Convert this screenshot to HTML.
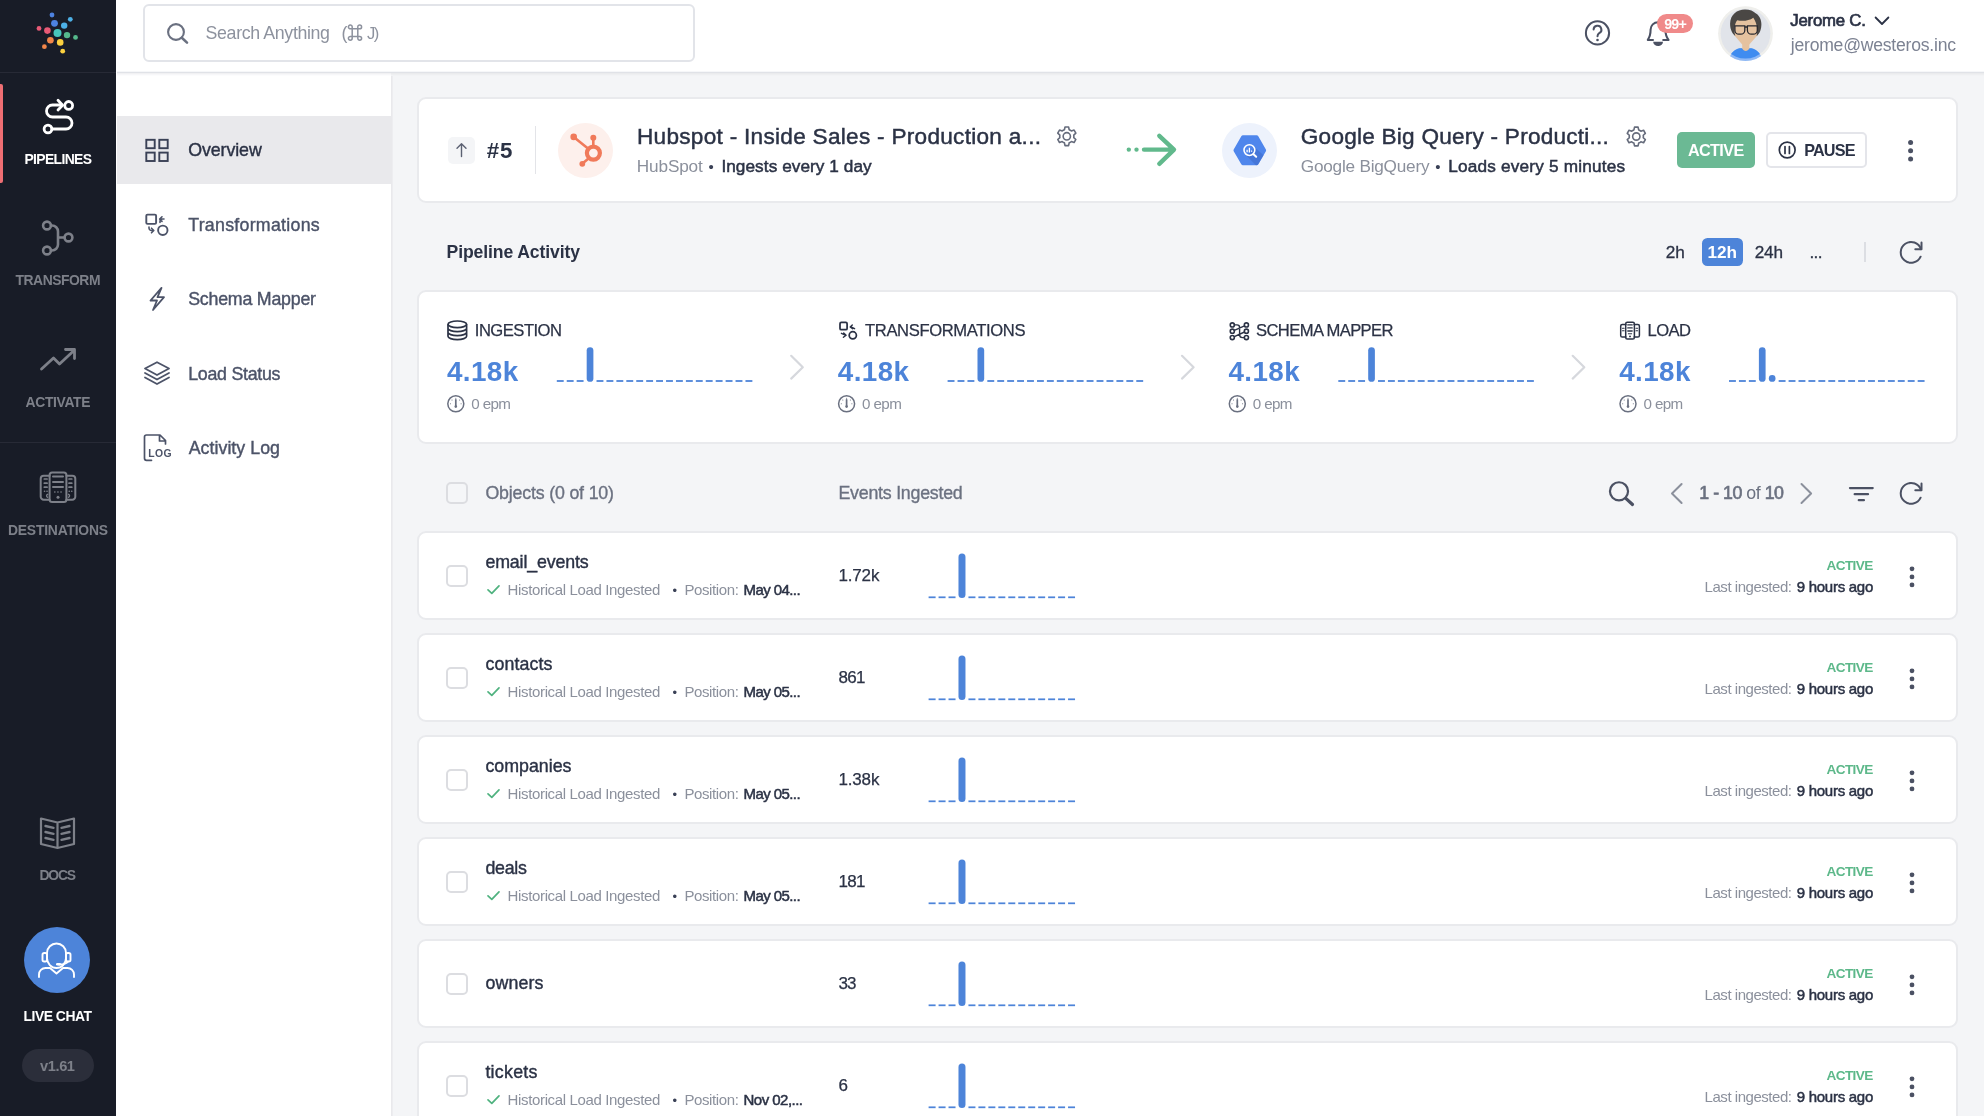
<!DOCTYPE html>
<html><head><meta charset="utf-8"><title>Pipeline Overview</title>
<style>
html,body{margin:0;padding:0;}
body{width:1984px;height:1116px;overflow:hidden;position:relative;background:#f4f5f7;font-family:"Liberation Sans", sans-serif;color:#2b3245;}
.t{position:absolute;white-space:pre;}
.a{position:absolute;}
.card{position:absolute;background:#fff;border:2px solid #e9eaed;border-radius:9px;box-sizing:border-box;}
svg{position:absolute;overflow:visible;}
#w{position:absolute;left:0;top:0;width:1984px;height:1116px;overflow:hidden;will-change:transform;}
</style></head><body><div id="w">
<div class="a" style="left:116px;top:0;width:1868px;height:71px;background:#fff;"></div>
<div class="a" style="left:116px;top:73px;width:275px;height:1043px;background:#fff;"></div>
<div class="a" style="left:391px;top:73px;width:1px;height:1043px;background:#e9e9ec;"></div>
<div class="a" style="left:392px;top:73px;width:1px;height:1043px;background:#ededf0;"></div>
<div class="a" style="left:117px;top:116px;width:274px;height:68px;background:#e9e9ec;"></div>
<div class="a" style="left:117px;top:71px;width:1867px;height:1px;background:#f6f7f9;"></div>
<div class="a" style="left:117px;top:72px;width:1867px;height:1px;background:#e0e2e7;"></div>
<div class="a" style="left:117px;top:73px;width:1867px;height:1px;background:#eaebed;"></div>
<div class="a" style="left:117px;top:74px;width:1867px;height:1px;background:#eeeff1;"></div>
<div class="a" style="left:117px;top:75px;width:1867px;height:1px;background:#f2f3f5;"></div>
<div class="a" style="left:117px;top:73px;width:274px;height:1px;background:#f1f1f3;"></div>
<div class="a" style="left:117px;top:74px;width:274px;height:1px;background:#f7f7f9;"></div>
<div class="a" style="left:117px;top:75px;width:274px;height:1px;background:#fcfcfd;"></div>
<div class="a" style="left:116px;top:0;width:1px;height:1116px;background:#fff;"></div>
<div class="a" style="left:0;top:0;width:116px;height:1116px;background:#181c27;"></div>
<div class="a" style="left:0;top:71.5px;width:116px;height:1.5px;background:#272a36;"></div>
<div class="a" style="left:0;top:441.5px;width:116px;height:1.5px;background:#272a36;"></div>
<div class="a" style="left:0;top:84px;width:3px;height:99px;background:#ee6e73;border-radius:0 2px 2px 0;"></div>
<svg style="left:0;top:0" width="116" height="72"><circle cx="52" cy="15" r="2.4" fill="#4d82e0"/><circle cx="70.3" cy="19.3" r="2.4" fill="#4db0e6"/><circle cx="54.5" cy="23.3" r="3.4" fill="#4d82e0"/><circle cx="64.2" cy="25.6" r="3.2" fill="#4db0e6"/><circle cx="39" cy="28.4" r="2.4" fill="#e85a76"/><circle cx="47.4" cy="30.6" r="3.3" fill="#e85a76"/><circle cx="57.5" cy="32.9" r="4" fill="#47c5bd"/><circle cx="67" cy="35.1" r="3.2" fill="#55b98c"/><circle cx="75.5" cy="37.4" r="2.4" fill="#55b98c"/><circle cx="50.4" cy="40.2" r="3.3" fill="#f2864a"/><circle cx="60.2" cy="42.4" r="3.3" fill="#fbd03f"/><circle cx="44.4" cy="46.7" r="2.4" fill="#f2864a"/><circle cx="62.7" cy="51.2" r="2.4" fill="#fbd03f"/></svg>
<svg style="left:0;top:0" width="116" height="200" fill="none" stroke="#ffffff" stroke-width="2.8" stroke-linecap="round" stroke-linejoin="round"><circle cx="48" cy="129" r="3.9"/><circle cx="68.7" cy="105.4" r="3.9"/><path d="M52 129 H66 a6 6 0 0 0 6 -6 a6 6 0 0 0 -6 -6 H52.5 a6 6 0 0 1 -6 -6 a6 6 0 0 1 6 -6 H61.5"/><path d="M58 100.2 L62.6 105.2 L58 110"/></svg>
<div class="t" style="top:150.01px;font-size:13.9px;line-height:18px;height:18px;color:#ffffff;left:24.50px;font-weight:700;letter-spacing:-0.645px;">PIPELINES</div>
<svg style="left:0;top:0" width="116" height="300" fill="none" stroke="#7d8089" stroke-width="2.6" stroke-linecap="round" stroke-linejoin="round"><circle cx="47" cy="225.5" r="3.9"/><circle cx="47" cy="250.5" r="3.9"/><circle cx="68.5" cy="237.5" r="3.9"/><path d="M51 225.5 h1 a6 6 0 0 1 6 6 v13 a6 6 0 0 1 -6 6 h-1 M58 237.5 h6.5"/></svg>
<div class="t" style="top:271.01px;font-size:13.9px;line-height:18px;height:18px;color:#7d8089;left:15.50px;font-weight:700;letter-spacing:-0.469px;">TRANSFORM</div>
<svg style="left:0;top:0" width="116" height="400" fill="none" stroke="#7d8089" stroke-width="2.8" stroke-linecap="round" stroke-linejoin="round"><path d="M41.5 369 L53.5 358 L59.5 364 L74 350.5 M65.5 349.5 H74.5 V358.5"/></svg>
<div class="t" style="top:392.51px;font-size:13.9px;line-height:18px;height:18px;color:#7d8089;left:25.50px;font-weight:700;letter-spacing:-0.342px;">ACTIVATE</div>
<svg style="left:0;top:0" width="116" height="520" fill="none" stroke="#7d8089" stroke-width="2" stroke-linecap="round" stroke-linejoin="round"><rect x="49.6" y="472.6" width="16.8" height="29.4" rx="2.5"/><path d="M49.6 475.8 H43.7 a3 3 0 0 0 -3 3 v17.9 a3 3 0 0 0 3 3 H49.6 M66.4 475.8 H72.3 a3 3 0 0 1 3 3 v17.9 a3 3 0 0 1 -3 3 H66.4"/><path d="M53 476.6 h10 M53 481.9 h10 M53 487.1 h10" /><path d="M44.300 479 h2.800 M44.300 483.200 h2.800 M44.300 487.200 h2.800 M69 479 h2.800 M69 483.200 h2.800 M69 487.200 h2.800" stroke-width="1.700"/><path d="M54.800 492 h.1 M57.900 492 h.1 M61 492 h.1 M44.500 491.300 h.1 M47 491.300 h.1 M69.200 491.300 h.1 M71.700 491.300 h.1" stroke-width="1.600"/><circle cx="58" cy="497.300" r="1.500" fill="#7d8089" stroke="none"/><path d="M47.600 494.300 a1.600 1.600 0 0 0 0 3 M68.500 494.300 a1.600 1.600 0 0 1 0 3" stroke-width="1.400"/></svg>
<div class="t" style="top:520.51px;font-size:13.9px;line-height:18px;height:18px;color:#7d8089;left:8.00px;font-weight:700;letter-spacing:-0.217px;">DESTINATIONS</div>
<svg style="left:0;top:0" width="116" height="900" fill="none" stroke="#7d8089" stroke-width="2.2" stroke-linecap="round" stroke-linejoin="round"><path d="M57.5 822.5 L41 818.5 V844 L57.5 848 L74 844 V818.5 Z M57.5 822.5 V848"/><path d="M45.5 826 l8 1.8 M45.5 832 l8 1.8 M45.5 838 l8 1.8 M69.5 826 l-8 1.8 M69.5 832 l-8 1.8 M69.5 838 l-8 1.8" stroke-width="2.4"/></svg>
<div class="t" style="top:866.01px;font-size:13.9px;line-height:18px;height:18px;color:#7d8089;left:39.50px;font-weight:700;letter-spacing:-1.214px;">DOCS</div>
<div class="a" style="left:23.5px;top:927px;width:66px;height:66px;border-radius:50%;background:#4d84d9;"></div>
<svg style="left:0;top:0" width="116" height="1000" fill="none" stroke="#fff" stroke-width="1.9" stroke-linecap="round" stroke-linejoin="round"><path d="M47 958 v-5 a9.5 9.5 0 0 1 19 0 v5 a9 9.5 0 0 1 -19 0"/><rect x="42.5" y="953" width="4.5" height="8.5" rx="1.8"/><rect x="66" y="953" width="4.5" height="8.5" rx="1.8"/><path d="M68 961.5 q-2 3 -9 3" /><rect x="56" y="963" width="5" height="2.4" rx="1.2" fill="#fff" stroke="none"/><path d="M39 977 v-2.5 a6.5 6.5 0 0 1 6.5 -6.5 h4.5 l6.5 5.5 l6.5 -5.5 h4.5 a6.5 6.5 0 0 1 6.5 6.5 v2.5"/></svg>
<div class="t" style="top:1006.51px;font-size:13.9px;line-height:18px;height:18px;color:#ffffff;left:23.50px;font-weight:700;letter-spacing:-0.473px;">LIVE CHAT</div>
<div class="a" style="left:22px;top:1049px;width:71.5px;height:32.5px;border-radius:17px;background:#2b2e3a;"></div>
<div class="t" style="top:1056.52px;font-size:14.6px;line-height:19px;height:19px;color:#7d8089;left:40.00px;font-weight:700;letter-spacing:-0.383px;">v1.61</div>
<div class="a" style="left:143px;top:4px;width:551.5px;height:58px;box-sizing:border-box;border:2px solid #e2e4e9;border-radius:6px;background:#fff;"></div>
<svg style="left:0;top:0" width="400" height="72" fill="none" stroke="#6a7080" stroke-width="2.1" stroke-linecap="round"><circle cx="176" cy="32" r="7.9"/><path d="M181.8 37.8 L187 42.6" stroke-width="2.6"/></svg>
<div class="t" style="top:22.41px;font-size:17.8px;line-height:23px;height:23px;color:#8d929e;left:205.60px;letter-spacing:-0.364px;">Search Anything</div>
<div class="t" style="top:22.41px;font-size:17.8px;line-height:23px;height:23px;color:#8d929e;left:341.40px;">(</div>
<svg style="left:0;top:0" width="400" height="72" fill="none" stroke="#8d929e" stroke-width="1.5"><path d="M352.2 28.8 h5.6 v7.6 h-5.6 z M352.2 28.8 h-1.6 a1.9 1.9 0 1 1 1.6 -1.9 z M357.8 28.8 v-1.9 a1.9 1.9 0 1 1 1.9 1.9 z M357.8 36.4 h1.9 a1.9 1.9 0 1 1 -1.9 1.9 z M352.2 36.4 v1.9 a1.9 1.9 0 1 1 -1.9 -1.9 z"/></svg>
<div class="t" style="top:23.41px;font-size:16.6px;line-height:22px;height:22px;color:#8d929e;left:366.90px;letter-spacing:-1.400px;">J)</div>
<svg style="left:0;top:0" width="1984" height="72" fill="none" stroke="#4b5163" stroke-width="2" stroke-linecap="round" stroke-linejoin="round"><circle cx="1597.5" cy="32.9" r="11.6"/><path d="M1593.6 29.6 a3.9 3.9 0 1 1 5.6 3.5 q-1.7 1 -1.7 3.2"/><circle cx="1597.5" cy="40" r="1.3" fill="#4b5163" stroke="none"/><path d="M1653 39.9 H1647.8 C1650.2 36.5 1650.6 33.5 1650.6 29.6 A7.4 7.4 0 0 1 1665.4 29.6 C1665.4 33.5 1665.8 36.5 1668.5 39.9 H1663.2" stroke-width="2.05"/><path d="M1653.2 41.7 H1663 A4.9 4.3 0 0 1 1653.2 41.7 Z" fill="#4b5163" stroke="none"/></svg>
<div class="a" style="left:1657.4px;top:13.8px;width:36.1px;height:19.3px;border-radius:10px;background:#f08a8a;"></div>
<div class="t" style="top:15.00px;font-size:14.3px;line-height:19px;height:19px;color:#fff;left:1664.20px;font-weight:700;letter-spacing:-0.783px;">99+</div>
<svg style="left:1718px;top:5.5px" width="55" height="56" viewBox="0 0 55 56"><defs><clipPath id="av"><circle cx="27.5" cy="27.6" r="27.4"/></clipPath><clipPath id="av2"><circle cx="27.5" cy="27.6" r="25"/></clipPath></defs><circle cx="27.5" cy="27.6" r="27.4" fill="#efefec"/><circle cx="27.5" cy="27.6" r="24.9" fill="#e1e4ea"/><g clip-path="url(#av)"><path d="M10.500 56 C11.500 47.500 16 43.500 21.600 42.200 L33.400 42.200 C39 43.500 43.500 47.500 44.500 56 Z" fill="#8fb9f6"/><path clip-path="url(#av2)" d="M10.500 56 C11.500 47.500 16 43.500 21.600 42.200 L33.400 42.200 C39 43.500 43.500 47.500 44.500 56 Z" fill="#3f8cf0"/><path d="M24.200 36 h7.100 v6.200 c-1.500 3.600 -5.600 3.600 -7.100 0 z" fill="#e5c29f"/><path d="M16.500 12 H39.300 V29.500 L31.300 38.600 H24.200 L16.500 29.500 Z" fill="#e5c29f"/><path d="M17.300 30 C13.500 27 12 22 12.100 17.500 C12.300 8.500 19 3.400 27 3.400 C32 3.400 35.500 5 38 7.500 C41.500 9.500 43.400 14 43.400 18 C43.400 23 42 27.500 38.600 30 C39.600 26 39.800 18 35.300 11.800 C31 15 24 15.500 19.200 14.200 C16.200 18 16 25 17.300 30 Z" fill="#4a4744"/><path d="M16.900 19.900 h9.900 v4.300 a4 4 0 0 1 -4 4 h-1.900 a4 4 0 0 1 -4 -4 z M29.400 19.900 h9.900 v4.300 a4 4 0 0 1 -4 4 h-1.900 a4 4 0 0 1 -4 -4 z M26.800 21 h2.600" fill="none" stroke="#2a2a30" stroke-width="1.300"/></g></svg>
<div class="t" style="top:9.90px;font-size:16.8px;line-height:22px;height:22px;color:#2b3245;left:1790.30px;letter-spacing:-0.226px;-webkit-text-stroke:0.7px #2b3245;">Jerome C.</div>
<svg style="left:0;top:0" width="1984" height="72" fill="none" stroke="#2b3245" stroke-width="1.8" stroke-linecap="round" stroke-linejoin="round"><path d="M1875.6 17.5 L1882 24 L1888.4 17.500"/></svg>
<div class="t" style="top:33.91px;font-size:17.6px;line-height:23px;height:23px;color:#7c8292;left:1790.80px;letter-spacing:-0.235px;">jerome@westeros.inc</div>
<svg style="left:0;top:0" width="400" height="520" fill="none" stroke="#3a4156" stroke-width="1.9" stroke-linejoin="miter"><rect x="146.3" y="139.8" width="8.4" height="8.400"/><rect x="159.3" y="139.800" width="8.400" height="8.400"/><rect x="146.3" y="152.600" width="8.400" height="8.400"/><rect x="159.300" y="152.600" width="8.400" height="8.400"/></svg>
<div class="t" style="top:138.91px;font-size:17.8px;line-height:23px;height:23px;color:#2b3245;left:188.20px;letter-spacing:-0.073px;-webkit-text-stroke:0.4px #2b3245;">Overview</div>
<svg style="left:0;top:0" width="400" height="520" fill="none" stroke="#4c5368" stroke-width="1.9" stroke-linecap="round" stroke-linejoin="round"><rect x="146.300" y="214.600" width="9.800" height="9.300" rx="1.200"/><circle cx="162.800" cy="230.300" r="4.700"/><path d="M160 222.500 v-1 a2.500 2.500 0 0 1 2.500 -2.500 h1.500 M162 216.800 l-2.300 2.300 l2.300 2.300" stroke-width="1.600"/><path d="M149 227 v1 a2.500 2.500 0 0 0 2.500 2.500 h1.500 M151.500 228.200 l2.300 2.300 l-2.300 2.300" stroke-width="1.600"/></svg>
<div class="t" style="top:213.50px;font-size:17.8px;line-height:23px;height:23px;color:#4c5368;left:188.20px;letter-spacing:0.263px;-webkit-text-stroke:0.4px #4c5368;">Transformations</div>
<svg style="left:0;top:0" width="400" height="520" fill="none" stroke="#4c5368" stroke-width="1.800" stroke-linecap="round" stroke-linejoin="round"><path d="M161.500 287.800 L150.500 300.500 H157 L153 310 L164 297.200 H157.500 Z"/></svg>
<div class="t" style="top:288.00px;font-size:17.8px;line-height:23px;height:23px;color:#4c5368;left:188.20px;letter-spacing:-0.222px;-webkit-text-stroke:0.4px #4c5368;">Schema Mapper</div>
<svg style="left:0;top:0" width="400" height="520" fill="none" stroke="#4c5368" stroke-width="1.800" stroke-linecap="round" stroke-linejoin="round"><path d="M157 362.200 L169 368.500 L157 375 L145 368.500 Z M145 373 L157 379.500 L169 373 M145 377.500 L157 384 L169 377.500"/></svg>
<div class="t" style="top:362.50px;font-size:17.8px;line-height:23px;height:23px;color:#4c5368;left:188.20px;letter-spacing:-0.261px;-webkit-text-stroke:0.4px #4c5368;">Load Status</div>
<svg style="left:0;top:0" width="400" height="520" fill="none" stroke="#4c5368" stroke-width="1.700" stroke-linecap="round" stroke-linejoin="round"><path d="M151.500 460.300 H146.500 a2 2 0 0 1 -2 -2 V437 a2 2 0 0 1 2 -2 H160 L165.500 440.500 V444 M159.500 435.300 V441 H165.500"/></svg>
<div class="t" style="top:446.91px;font-size:10.4px;line-height:14px;height:14px;color:#4c5368;left:148.30px;font-weight:700;letter-spacing:0.342px;">LOG</div>
<div class="t" style="top:437.00px;font-size:17.8px;line-height:23px;height:23px;color:#4c5368;left:188.70px;letter-spacing:0.034px;-webkit-text-stroke:0.4px #4c5368;">Activity Log</div>
<div class="card" style="left:417px;top:97px;width:1540.5px;height:106px;"></div>
<div class="a" style="left:448px;top:136.800px;width:27px;height:27px;border-radius:5px;background:#f4f5f7;"></div>
<svg style="left:0;top:0" width="1984" height="220" fill="none" stroke="#5b6172" stroke-width="1.400" stroke-linecap="round" stroke-linejoin="round"><path d="M461.500 156.500 V144 M457 148.300 L461.500 143.800 L466 148.300"/></svg>
<div class="t" style="top:136.22px;font-size:22.3px;line-height:29px;height:29px;color:#2b3245;left:486.70px;font-weight:700;letter-spacing:0.887px;">#5</div>
<div class="a" style="left:534.700px;top:125.700px;width:1.500px;height:48.700px;background:#e3e4e8;"></div>
<div class="a" style="left:558.2px;top:122.700px;width:55.200px;height:55.200px;border-radius:50%;background:#fdf0ec;"></div>
<svg style="left:0;top:0" width="1984" height="220" fill="none" stroke="#f07a5a" stroke-linecap="round"><circle cx="593.4" cy="153.1" r="6.5" stroke-width="4.200"/><path d="M573.700 136.900 L588 148.500" stroke-width="2.600"/><circle cx="573.700" cy="136.900" r="3.300" fill="#f07a5a" stroke="none"/><path d="M593.300 146 V138.500" stroke-width="2.600"/><circle cx="593.300" cy="137.700" r="3" fill="#f07a5a" stroke="none"/><path d="M588.500 158.500 L582.500 163.500" stroke-width="2.600"/><circle cx="582.300" cy="163.800" r="2.900" fill="#f07a5a" stroke="none"/></svg>
<div class="t" style="top:122.10px;font-size:22.6px;line-height:29px;height:29px;color:#2b3245;left:637.00px;letter-spacing:0.280px;-webkit-text-stroke:0.45px #2b3245;">Hubspot - Inside Sales - Production a...</div>
<div class="t" style="top:155.01px;font-size:17.2px;line-height:22px;height:22px;color:#8b909c;left:636.80px;letter-spacing:-0.148px;">HubSpot</div>
<div class="t" style="top:157.00px;font-size:15px;line-height:20px;height:20px;color:#3a4156;left:708.50px;">•</div>
<div class="t" style="top:155.01px;font-size:17.2px;line-height:22px;height:22px;color:#2b3245;left:721.40px;letter-spacing:0.070px;-webkit-text-stroke:0.5px #2b3245;">Ingests every 1 day</div>
<svg style="left:0;top:0" width="1984" height="220"><g transform="translate(1066.8,136.3) scale(1.04)" fill="none" stroke="#666c7c" stroke-width="1.550" stroke-linejoin="round"><circle r="3.500"/><path transform="translate(0,0.8)" d="M-1.700 -9.800 h3.400 l0.600 2.700 a7.200 7.200 0 0 1 2.100 1.200 l2.600 -0.900 l1.700 2.950 l-2 1.850 a7.200 7.200 0 0 1 0 2.400 l2 1.850 l-1.700 2.950 l-2.600 -0.900 a7.200 7.200 0 0 1 -2.100 1.200 l-0.600 2.700 h-3.400 l-0.600 -2.700 a7.200 7.200 0 0 1 -2.100 -1.200 l-2.600 0.900 l-1.700 -2.950 l2 -1.850 a7.200 7.200 0 0 1 0 -2.400 l-2 -1.850 l1.700 -2.950 l2.600 0.900 a7.200 7.200 0 0 1 2.100 -1.200 z"/></g><g transform="translate(1636.3,136.5) scale(1.04)" fill="none" stroke="#666c7c" stroke-width="1.550" stroke-linejoin="round"><circle r="3.500"/><path transform="translate(0,0.8)" d="M-1.700 -9.800 h3.400 l0.600 2.700 a7.200 7.200 0 0 1 2.100 1.200 l2.600 -0.900 l1.700 2.950 l-2 1.850 a7.200 7.200 0 0 1 0 2.400 l2 1.850 l-1.700 2.950 l-2.600 -0.900 a7.200 7.200 0 0 1 -2.100 1.200 l-0.600 2.700 h-3.400 l-0.600 -2.700 a7.200 7.200 0 0 1 -2.100 -1.200 l-2.600 0.900 l-1.700 -2.950 l2 -1.850 a7.200 7.200 0 0 1 0 -2.400 l-2 -1.850 l1.700 -2.950 l2.600 0.900 a7.200 7.200 0 0 1 2.100 -1.200 z"/></g></svg>
<svg style="left:0;top:0" width="1984" height="220" fill="none" stroke="#61b98c" stroke-width="4.400" stroke-linecap="round" stroke-linejoin="round"><path d="M1128.800 149.600 h.01 M1136.500 149.600 h.01 M1144 149.600 H1173.500 M1159.300 135.800 L1174 149.600 L1159.300 163.800"/></svg>
<div class="a" style="left:1222.2px;top:122.700px;width:55.200px;height:55.200px;border-radius:50%;background:#edf2fc;"></div>
<svg style="left:0;top:0" width="1984" height="220"><defs><clipPath id="hx"><path d="M1243 135.3 h13.6 a2 2 0 0 1 1.7 1 l7.6 13.1 a2 2 0 0 1 0 1.8 l-7.6 13.1 a2 2 0 0 1 -1.7 1 h-13.6 a2 2 0 0 1 -1.7 -1 l-7.6 -13.1 a2 2 0 0 1 0 -1.8 l7.6 -13.1 a2 2 0 0 1 1.7 -1 z"/></clipPath></defs><path d="M1243 135.3 h13.6 a2 2 0 0 1 1.7 1 l7.6 13.1 a2 2 0 0 1 0 1.8 l-7.6 13.1 a2 2 0 0 1 -1.7 1 h-13.6 a2 2 0 0 1 -1.7 -1 l-7.6 -13.1 a2 2 0 0 1 0 -1.8 l7.6 -13.1 a2 2 0 0 1 1.7 -1 z" fill="#4f86ec"/><g clip-path="url(#hx)"><path d="M1246.400 155.600 L1256.500 166 H1268 V159 L1254.800 147.600 Z" fill="#3f6dcb" opacity=".6"/></g><circle cx="1249.400" cy="150.100" r="5.400" fill="none" stroke="#fff" stroke-width="1.600"/><path d="M1253.500 154.200 L1256.200 156.800" stroke="#fff" stroke-width="2" stroke-linecap="round"/><path d="M1247.100 149.800 v2.400 M1249.400 147.700 v4.900 M1251.600 150.400 v1.400" stroke="#fff" stroke-width="1.300"/></svg>
<div class="t" style="top:122.10px;font-size:22.6px;line-height:29px;height:29px;color:#2b3245;left:1300.80px;letter-spacing:0.231px;-webkit-text-stroke:0.45px #2b3245;">Google Big Query - Producti...</div>
<div class="t" style="top:154.71px;font-size:17.2px;line-height:22px;height:22px;color:#8b909c;left:1300.80px;letter-spacing:-0.225px;">Google BigQuery</div>
<div class="t" style="top:156.71px;font-size:15px;line-height:20px;height:20px;color:#3a4156;left:1435.20px;">•</div>
<div class="t" style="top:154.71px;font-size:17.2px;line-height:22px;height:22px;color:#2b3245;left:1448.20px;letter-spacing:0.198px;-webkit-text-stroke:0.5px #2b3245;">Loads every 5 minutes</div>
<div class="a" style="left:1676.8px;top:132.300px;width:78.400px;height:35.400px;border-radius:5px;background:#6bb994;"></div>
<div class="t" style="top:140.11px;font-size:16.2px;line-height:21px;height:21px;color:#fff;left:1688.00px;font-weight:700;letter-spacing:-0.635px;">ACTIVE</div>
<div class="a" style="left:1766.4px;top:132.300px;width:100.300px;height:35.400px;box-sizing:border-box;border:2px solid #e4e5ea;border-radius:5px;background:#fff;"></div>
<svg style="left:0;top:0" width="1984" height="220" fill="none" stroke="#2b3245" stroke-width="1.700" stroke-linecap="round"><circle cx="1787.200" cy="150" r="7.900"/><path d="M1785 146.500 v7 M1789.400 146.500 v7"/></svg>
<div class="t" style="top:140.11px;font-size:16.2px;line-height:21px;height:21px;color:#2b3245;left:1804.20px;font-weight:700;letter-spacing:-0.820px;">PAUSE</div>
<svg style="left:0;top:0" width="1984" height="220" fill="#4b5163"><circle cx="1910.600" cy="142.600" r="2.500"/><circle cx="1910.600" cy="150.800" r="2.500"/><circle cx="1910.600" cy="159" r="2.500"/></svg>
<div class="t" style="top:240.71px;font-size:17.6px;line-height:23px;height:23px;color:#2b3245;left:446.60px;font-weight:700;letter-spacing:-0.117px;">Pipeline Activity</div>
<div class="t" style="top:240.71px;font-size:17.2px;line-height:22px;height:22px;color:#2b3245;left:1665.80px;letter-spacing:-0.125px;-webkit-text-stroke:0.3px #2b3245;">2h</div>
<div class="a" style="left:1701.6px;top:238.200px;width:41.300px;height:27.400px;border-radius:5.500px;background:#4d84d9;"></div>
<div class="t" style="top:240.71px;font-size:17.2px;line-height:22px;height:22px;color:#fff;left:1707.50px;font-weight:700;letter-spacing:-0.062px;">12h</div>
<div class="t" style="top:240.71px;font-size:17.2px;line-height:22px;height:22px;color:#2b3245;left:1754.80px;letter-spacing:-0.244px;-webkit-text-stroke:0.3px #2b3245;">24h</div>
<div class="t" style="top:240.71px;font-size:17.2px;line-height:22px;height:22px;color:#2b3245;left:1809.50px;letter-spacing:-0.664px;-webkit-text-stroke:0.3px #2b3245;">...</div>
<div class="a" style="left:1864px;top:242.400px;width:1.500px;height:20px;background:#dcdee3;"></div>
<svg style="left:0;top:0" width="1984" height="520"><g transform="translate(1911.1,252.4)" fill="none" stroke="#4b5163" stroke-width="2" stroke-linecap="round" stroke-linejoin="round"><path d="M9.500 4.300 A10.400 10.400 0 1 1 9.900 -3.300"/><path d="M4.200 -3.200 H10.400 V-9.800"/></g></svg>
<div class="card" style="left:417px;top:290px;width:1540.5px;height:154.2px;"></div>
<div class="t" style="top:320.31px;font-size:16.6px;line-height:22px;height:22px;color:#2b3245;left:474.80px;letter-spacing:-0.510px;-webkit-text-stroke:0.25px #2b3245;">INGESTION</div>
<div class="t" style="top:354.11px;font-size:27.8px;line-height:36px;height:36px;color:#4d84d9;left:447.00px;font-weight:700;letter-spacing:0.409px;">4.18k</div>
<div class="t" style="top:393.61px;font-size:15.2px;line-height:20px;height:20px;color:#8b909c;left:471.30px;letter-spacing:-0.630px;">0 epm</div>
<div class="t" style="top:320.31px;font-size:16.6px;line-height:22px;height:22px;color:#2b3245;left:865.00px;letter-spacing:-0.367px;-webkit-text-stroke:0.25px #2b3245;">TRANSFORMATIONS</div>
<div class="t" style="top:354.11px;font-size:27.8px;line-height:36px;height:36px;color:#4d84d9;left:837.80px;font-weight:700;letter-spacing:0.409px;">4.18k</div>
<div class="t" style="top:393.61px;font-size:15.2px;line-height:20px;height:20px;color:#8b909c;left:862.10px;letter-spacing:-0.630px;">0 epm</div>
<div class="t" style="top:320.31px;font-size:16.6px;line-height:22px;height:22px;color:#2b3245;left:1256.00px;letter-spacing:-0.605px;-webkit-text-stroke:0.25px #2b3245;">SCHEMA MAPPER</div>
<div class="t" style="top:354.11px;font-size:27.8px;line-height:36px;height:36px;color:#4d84d9;left:1228.50px;font-weight:700;letter-spacing:0.409px;">4.18k</div>
<div class="t" style="top:393.61px;font-size:15.2px;line-height:20px;height:20px;color:#8b909c;left:1252.80px;letter-spacing:-0.630px;">0 epm</div>
<div class="t" style="top:320.31px;font-size:16.6px;line-height:22px;height:22px;color:#2b3245;left:1647.50px;letter-spacing:-0.562px;-webkit-text-stroke:0.25px #2b3245;">LOAD</div>
<div class="t" style="top:354.11px;font-size:27.8px;line-height:36px;height:36px;color:#4d84d9;left:1619.20px;font-weight:700;letter-spacing:0.409px;">4.18k</div>
<div class="t" style="top:393.61px;font-size:15.2px;line-height:20px;height:20px;color:#8b909c;left:1643.50px;letter-spacing:-0.630px;">0 epm</div>
<svg style="left:0;top:0" width="1984" height="460"><g stroke="#4d84d9" stroke-width="1.8" fill="none"><path d="M556.80 381.00 h6.90"/><path d="M566.73 381.00 h6.90"/><path d="M576.66 381.00 h6.90"/><path d="M596.52 381.00 h6.90"/><path d="M606.45 381.00 h6.90"/><path d="M616.38 381.00 h6.90"/><path d="M626.31 381.00 h6.90"/><path d="M636.24 381.00 h6.90"/><path d="M646.17 381.00 h6.90"/><path d="M656.10 381.00 h6.90"/><path d="M666.03 381.00 h6.90"/><path d="M675.96 381.00 h6.90"/><path d="M685.89 381.00 h6.90"/><path d="M695.82 381.00 h6.90"/><path d="M705.75 381.00 h6.90"/><path d="M715.68 381.00 h6.90"/><path d="M725.61 381.00 h6.90"/><path d="M735.54 381.00 h6.90"/><path d="M745.47 381.00 h6.90"/></g><rect x="586.69" y="347.20" width="6.70" height="34.55" rx="3.35" fill="#4d84d9"/><g transform="translate(455.8,403.8)" fill="none" stroke="#6a7080" stroke-width="1.500" stroke-linecap="round"><circle r="8"/><path d="M0 -4 V2.200" stroke-width="1.700"/><circle cy="2.800" r="1.300" fill="#6a7080" stroke="none"/><path d="M-5.300 0 h.01 M5.300 0 h.01 M-3.800 -3.800 h.01 M3.800 -3.800 h.01 M0 -5.600 h.01" stroke-width="1.100"/></g><path d="M791.20 355.800 L802.80 367.200 L791.20 378.600" fill="none" stroke="#d6d8dd" stroke-width="2.200" stroke-linecap="round" stroke-linejoin="round"/><g stroke="#4d84d9" stroke-width="1.8" fill="none"><path d="M947.60 381.00 h6.90"/><path d="M957.53 381.00 h6.90"/><path d="M967.46 381.00 h6.90"/><path d="M987.32 381.00 h6.90"/><path d="M997.25 381.00 h6.90"/><path d="M1007.18 381.00 h6.90"/><path d="M1017.11 381.00 h6.90"/><path d="M1027.04 381.00 h6.90"/><path d="M1036.97 381.00 h6.90"/><path d="M1046.90 381.00 h6.90"/><path d="M1056.83 381.00 h6.90"/><path d="M1066.76 381.00 h6.90"/><path d="M1076.69 381.00 h6.90"/><path d="M1086.62 381.00 h6.90"/><path d="M1096.55 381.00 h6.90"/><path d="M1106.48 381.00 h6.90"/><path d="M1116.41 381.00 h6.90"/><path d="M1126.34 381.00 h6.90"/><path d="M1136.27 381.00 h6.90"/></g><rect x="977.49" y="347.20" width="6.70" height="34.55" rx="3.35" fill="#4d84d9"/><g transform="translate(846.5999999999999,403.8)" fill="none" stroke="#6a7080" stroke-width="1.500" stroke-linecap="round"><circle r="8"/><path d="M0 -4 V2.200" stroke-width="1.700"/><circle cy="2.800" r="1.300" fill="#6a7080" stroke="none"/><path d="M-5.300 0 h.01 M5.300 0 h.01 M-3.800 -3.800 h.01 M3.800 -3.800 h.01 M0 -5.600 h.01" stroke-width="1.100"/></g><path d="M1182.00 355.800 L1193.60 367.200 L1182.00 378.600" fill="none" stroke="#d6d8dd" stroke-width="2.200" stroke-linecap="round" stroke-linejoin="round"/><g stroke="#4d84d9" stroke-width="1.8" fill="none"><path d="M1338.30 381.00 h6.90"/><path d="M1348.23 381.00 h6.90"/><path d="M1358.16 381.00 h6.90"/><path d="M1378.02 381.00 h6.90"/><path d="M1387.95 381.00 h6.90"/><path d="M1397.88 381.00 h6.90"/><path d="M1407.81 381.00 h6.90"/><path d="M1417.74 381.00 h6.90"/><path d="M1427.67 381.00 h6.90"/><path d="M1437.60 381.00 h6.90"/><path d="M1447.53 381.00 h6.90"/><path d="M1457.46 381.00 h6.90"/><path d="M1467.39 381.00 h6.90"/><path d="M1477.32 381.00 h6.90"/><path d="M1487.25 381.00 h6.90"/><path d="M1497.18 381.00 h6.90"/><path d="M1507.11 381.00 h6.90"/><path d="M1517.04 381.00 h6.90"/><path d="M1526.97 381.00 h6.90"/></g><rect x="1368.19" y="347.20" width="6.70" height="34.55" rx="3.35" fill="#4d84d9"/><g transform="translate(1237.3,403.8)" fill="none" stroke="#6a7080" stroke-width="1.500" stroke-linecap="round"><circle r="8"/><path d="M0 -4 V2.200" stroke-width="1.700"/><circle cy="2.800" r="1.300" fill="#6a7080" stroke="none"/><path d="M-5.300 0 h.01 M5.300 0 h.01 M-3.800 -3.800 h.01 M3.800 -3.800 h.01 M0 -5.600 h.01" stroke-width="1.100"/></g><path d="M1572.70 355.800 L1584.30 367.200 L1572.70 378.600" fill="none" stroke="#d6d8dd" stroke-width="2.200" stroke-linecap="round" stroke-linejoin="round"/><g stroke="#4d84d9" stroke-width="1.8" fill="none"><path d="M1729.00 381.00 h6.90"/><path d="M1738.93 381.00 h6.90"/><path d="M1748.86 381.00 h6.90"/><path d="M1778.65 381.00 h6.90"/><path d="M1788.58 381.00 h6.90"/><path d="M1798.51 381.00 h6.90"/><path d="M1808.44 381.00 h6.90"/><path d="M1818.37 381.00 h6.90"/><path d="M1828.30 381.00 h6.90"/><path d="M1838.23 381.00 h6.90"/><path d="M1848.16 381.00 h6.90"/><path d="M1858.09 381.00 h6.90"/><path d="M1868.02 381.00 h6.90"/><path d="M1877.95 381.00 h6.90"/><path d="M1887.88 381.00 h6.90"/><path d="M1897.81 381.00 h6.90"/><path d="M1907.74 381.00 h6.90"/><path d="M1917.67 381.00 h6.90"/></g><rect x="1758.89" y="347.20" width="6.70" height="34.55" rx="3.35" fill="#4d84d9"/><circle cx="1772.17" cy="378.40" r="3.35" fill="#4d84d9"/><g transform="translate(1628.0,403.8)" fill="none" stroke="#6a7080" stroke-width="1.500" stroke-linecap="round"><circle r="8"/><path d="M0 -4 V2.200" stroke-width="1.700"/><circle cy="2.800" r="1.300" fill="#6a7080" stroke="none"/><path d="M-5.300 0 h.01 M5.300 0 h.01 M-3.800 -3.800 h.01 M3.800 -3.800 h.01 M0 -5.600 h.01" stroke-width="1.100"/></g><g fill="none" stroke="#2b3245" stroke-width="1.700" stroke-linejoin="round"><ellipse cx="457.300" cy="324.300" rx="9.300" ry="3.300"/><path d="M448 324.300 V336.300 a9.300 3.300 0 0 0 18.600 0 V324.300 M448 328.300 a9.300 3.300 0 0 0 18.600 0 M448 332.300 a9.300 3.300 0 0 0 18.600 0"/></g><g fill="none" stroke="#2b3245" stroke-width="1.750" stroke-linecap="round" stroke-linejoin="round"><rect x="840" y="322.400" width="7.100" height="7.300" rx="1.300"/><circle cx="852.800" cy="335.300" r="3.600"/><path d="M854.600 328.700 L851 327 M852.300 324.900 L850.200 326.900 L852.600 328.800" stroke-width="1.400"/><path d="M841.400 333.300 L845.300 335.100 M843.700 332.900 L846.100 335.200 L843.400 337.300" stroke-width="1.400"/></g><g fill="none" stroke="#2b3245" stroke-width="1.600" stroke-linecap="round"><circle cx="1232.3" cy="324.9" r="2.050"/><circle cx="1232.3" cy="331.2" r="2.050"/><circle cx="1232.3" cy="337.6" r="2.050"/><circle cx="1246.4" cy="324.9" r="2.050"/><circle cx="1246.4" cy="331.2" r="2.050"/><circle cx="1246.4" cy="337.6" r="2.050"/><path d="M1234.400 324.900 H1237 a2.600 2.600 0 0 1 2.600 2.600 V334.800 a2.800 2.800 0 0 0 2.800 2.800 H1244.300 M1234.300 330.400 L1244.500 325.800 M1234.300 336.700 L1244.500 332" stroke-width="1.400"/></g><g fill="none" stroke="#2b3245" stroke-width="1.500" stroke-linecap="round" stroke-linejoin="round"><rect x="1625.700" y="322.300" width="8.700" height="16.700" rx="1.600"/><path d="M1625.900 324.400 H1622.300 a1.600 1.600 0 0 0 -1.600 1.600 V335.500 a1.600 1.600 0 0 0 1.600 1.600 H1625.900 M1634.100 324.400 H1637.800 a1.600 1.600 0 0 1 1.600 1.600 V335.500 a1.600 1.600 0 0 1 -1.600 1.600 H1634.100"/><path d="M1627.800 324.900 h4.400 M1627.800 327.900 h4.400 M1627.800 331 h4.400" stroke-width="1.300"/><path d="M1622.500 328.300 h1.600 M1622.500 330.700 h1.600 M1636 328.300 h1.600 M1636 330.700 h1.600" stroke-width="1.100"/><path d="M1628.400 333.700 h3.200" stroke-width="1.100" stroke-dasharray="0.700 0.550"/><circle cx="1630" cy="336.400" r="0.950" fill="#2b3245" stroke="none"/></g></svg>
<div class="a" style="left:446.4px;top:482.0px;width:22px;height:22px;box-sizing:border-box;border:2px solid #dcdde1;border-radius:5px;background:#f5f6f8;"></div>
<div class="t" style="top:482.20px;font-size:17.8px;line-height:23px;height:23px;color:#6b7180;left:485.40px;letter-spacing:-0.178px;-webkit-text-stroke:0.35px #6b7180;">Objects (0 of 10)</div>
<div class="t" style="top:482.20px;font-size:17.8px;line-height:23px;height:23px;color:#6b7180;left:838.50px;letter-spacing:-0.238px;-webkit-text-stroke:0.35px #6b7180;">Events Ingested</div>
<svg style="left:0;top:0" width="1984" height="520" fill="none" stroke-linecap="round" stroke-linejoin="round"><g stroke="#4b5163" stroke-width="2.200"><circle cx="1619" cy="491.300" r="9.050"/><path d="M1625.800 498.300 L1632.500 504.500" stroke-width="3.200"/></g><path d="M1681.600 484 L1672 493.500 L1681.600 503" stroke="#8b909c" stroke-width="2"/><path d="M1801.500 484 L1811.100 493.500 L1801.500 503" stroke="#8b909c" stroke-width="2"/><path d="M1850 488.100 H1872.700 M1854.700 494.200 H1868 M1858.800 500.200 H1863.900" stroke="#4b5163" stroke-width="2.300"/><g transform="translate(1911.1,493.4)" fill="none" stroke="#4b5163" stroke-width="2" stroke-linecap="round" stroke-linejoin="round"><path d="M9.500 4.300 A10.400 10.400 0 1 1 9.900 -3.300"/><path d="M4.200 -3.200 H10.400 V-9.800"/></g></svg>
<div class="t" style="top:482.20px;font-size:17.8px;line-height:23px;height:23px;color:#6b7180;left:1699.30px;letter-spacing:-0.480px;"><span style="-webkit-text-stroke:.65px #6b7180">1 - 10</span> of <span style="-webkit-text-stroke:.65px #6b7180">10</span></div>
<div class="card" style="left:417px;top:531.0px;width:1540.5px;height:89.3px;"></div>
<div class="a" style="left:446.4px;top:565.0px;width:22px;height:22px;box-sizing:border-box;border:2px solid #dcdde1;border-radius:5px;background:#fff;"></div>
<div class="t" style="top:550.81px;font-size:17.8px;line-height:23px;height:23px;color:#2b3245;left:485.40px;letter-spacing:-0.135px;-webkit-text-stroke:0.4px #2b3245;">email_events</div>
<svg style="left:0;top:0" width="1984" height="1116" fill="none" stroke="#4fb27f" stroke-width="1.700" stroke-linecap="round" stroke-linejoin="round"><path d="M488 589.8 L491.800 593.3 L499 585.8"/></svg>
<div class="t" style="top:580.41px;font-size:15px;line-height:20px;height:20px;color:#8b909c;left:507.60px;letter-spacing:-0.354px;">Historical Load Ingested</div>
<div class="t" style="top:582.41px;font-size:13px;line-height:17px;height:17px;color:#3a4156;left:672.50px;">•</div>
<div class="t" style="top:580.41px;font-size:15px;line-height:20px;height:20px;color:#8b909c;left:684.40px;letter-spacing:-0.381px;">Position:</div>
<div class="t" style="top:580.41px;font-size:15px;line-height:20px;height:20px;color:#2b3245;left:743.50px;letter-spacing:-0.575px;-webkit-text-stroke:0.5px #2b3245;">May 04...</div>
<div class="t" style="top:565.31px;font-size:17px;line-height:22px;height:22px;color:#2b3245;left:838.50px;letter-spacing:-0.173px;-webkit-text-stroke:0.25px #2b3245;">1.72k</div>
<svg style="left:0;top:0" width="1984" height="1140"><g stroke="#4d84d9" stroke-width="1.75" fill="none"><path d="M928.60 597.30 h7.00"/><path d="M938.56 597.30 h7.00"/><path d="M948.52 597.30 h7.00"/><path d="M968.44 597.30 h7.00"/><path d="M978.40 597.30 h7.00"/><path d="M988.36 597.30 h7.00"/><path d="M998.32 597.30 h7.00"/><path d="M1008.28 597.30 h7.00"/><path d="M1018.24 597.30 h7.00"/><path d="M1028.20 597.30 h7.00"/><path d="M1038.16 597.30 h7.00"/><path d="M1048.12 597.30 h7.00"/><path d="M1058.08 597.30 h7.00"/><path d="M1068.04 597.30 h7.00"/></g><rect x="958.48" y="553.60" width="7.00" height="44.45" rx="3.50" fill="#4d84d9"/></svg>
<div class="t" style="top:557.20px;font-size:13.6px;line-height:18px;height:18px;color:#5db88a;left:1826.50px;font-weight:700;letter-spacing:-0.612px;">ACTIVE</div>
<div class="t" style="top:577.00px;font-size:15px;line-height:20px;height:20px;color:#8b909c;left:1704.60px;letter-spacing:-0.462px;">Last ingested:</div>
<div class="t" style="top:577.00px;font-size:15px;line-height:20px;height:20px;color:#2b3245;left:1796.70px;letter-spacing:-0.263px;-webkit-text-stroke:0.5px #2b3245;">9 hours ago</div>
<svg style="left:0;top:0" width="1984" height="1140" fill="#4b5163"><circle cx="1912" cy="568.8" r="2.400"/><circle cx="1912" cy="576.9" r="2.400"/><circle cx="1912" cy="584.9" r="2.400"/></svg>
<div class="card" style="left:417px;top:633.0px;width:1540.5px;height:89.3px;"></div>
<div class="a" style="left:446.4px;top:667.0px;width:22px;height:22px;box-sizing:border-box;border:2px solid #dcdde1;border-radius:5px;background:#fff;"></div>
<div class="t" style="top:652.81px;font-size:17.8px;line-height:23px;height:23px;color:#2b3245;left:485.40px;letter-spacing:0.124px;-webkit-text-stroke:0.4px #2b3245;">contacts</div>
<svg style="left:0;top:0" width="1984" height="1116" fill="none" stroke="#4fb27f" stroke-width="1.700" stroke-linecap="round" stroke-linejoin="round"><path d="M488 691.8 L491.800 695.3 L499 687.8"/></svg>
<div class="t" style="top:682.41px;font-size:15px;line-height:20px;height:20px;color:#8b909c;left:507.60px;letter-spacing:-0.354px;">Historical Load Ingested</div>
<div class="t" style="top:684.41px;font-size:13px;line-height:17px;height:17px;color:#3a4156;left:672.50px;">•</div>
<div class="t" style="top:682.41px;font-size:15px;line-height:20px;height:20px;color:#8b909c;left:684.40px;letter-spacing:-0.381px;">Position:</div>
<div class="t" style="top:682.41px;font-size:15px;line-height:20px;height:20px;color:#2b3245;left:743.50px;letter-spacing:-0.575px;-webkit-text-stroke:0.5px #2b3245;">May 05...</div>
<div class="t" style="top:667.31px;font-size:17px;line-height:22px;height:22px;color:#2b3245;left:838.50px;letter-spacing:-0.688px;-webkit-text-stroke:0.25px #2b3245;">861</div>
<svg style="left:0;top:0" width="1984" height="1140"><g stroke="#4d84d9" stroke-width="1.75" fill="none"><path d="M928.60 699.30 h7.00"/><path d="M938.56 699.30 h7.00"/><path d="M948.52 699.30 h7.00"/><path d="M968.44 699.30 h7.00"/><path d="M978.40 699.30 h7.00"/><path d="M988.36 699.30 h7.00"/><path d="M998.32 699.30 h7.00"/><path d="M1008.28 699.30 h7.00"/><path d="M1018.24 699.30 h7.00"/><path d="M1028.20 699.30 h7.00"/><path d="M1038.16 699.30 h7.00"/><path d="M1048.12 699.30 h7.00"/><path d="M1058.08 699.30 h7.00"/><path d="M1068.04 699.30 h7.00"/></g><rect x="958.48" y="655.60" width="7.00" height="44.45" rx="3.50" fill="#4d84d9"/></svg>
<div class="t" style="top:659.20px;font-size:13.6px;line-height:18px;height:18px;color:#5db88a;left:1826.50px;font-weight:700;letter-spacing:-0.612px;">ACTIVE</div>
<div class="t" style="top:679.00px;font-size:15px;line-height:20px;height:20px;color:#8b909c;left:1704.60px;letter-spacing:-0.462px;">Last ingested:</div>
<div class="t" style="top:679.00px;font-size:15px;line-height:20px;height:20px;color:#2b3245;left:1796.70px;letter-spacing:-0.263px;-webkit-text-stroke:0.5px #2b3245;">9 hours ago</div>
<svg style="left:0;top:0" width="1984" height="1140" fill="#4b5163"><circle cx="1912" cy="670.8" r="2.400"/><circle cx="1912" cy="678.9" r="2.400"/><circle cx="1912" cy="686.9" r="2.400"/></svg>
<div class="card" style="left:417px;top:735.0px;width:1540.5px;height:89.3px;"></div>
<div class="a" style="left:446.4px;top:769.0px;width:22px;height:22px;box-sizing:border-box;border:2px solid #dcdde1;border-radius:5px;background:#fff;"></div>
<div class="t" style="top:754.81px;font-size:17.8px;line-height:23px;height:23px;color:#2b3245;left:485.40px;letter-spacing:0.013px;-webkit-text-stroke:0.4px #2b3245;">companies</div>
<svg style="left:0;top:0" width="1984" height="1116" fill="none" stroke="#4fb27f" stroke-width="1.700" stroke-linecap="round" stroke-linejoin="round"><path d="M488 793.8 L491.800 797.3 L499 789.8"/></svg>
<div class="t" style="top:784.41px;font-size:15px;line-height:20px;height:20px;color:#8b909c;left:507.60px;letter-spacing:-0.354px;">Historical Load Ingested</div>
<div class="t" style="top:786.41px;font-size:13px;line-height:17px;height:17px;color:#3a4156;left:672.50px;">•</div>
<div class="t" style="top:784.41px;font-size:15px;line-height:20px;height:20px;color:#8b909c;left:684.40px;letter-spacing:-0.381px;">Position:</div>
<div class="t" style="top:784.41px;font-size:15px;line-height:20px;height:20px;color:#2b3245;left:743.50px;letter-spacing:-0.575px;-webkit-text-stroke:0.5px #2b3245;">May 05...</div>
<div class="t" style="top:769.31px;font-size:17px;line-height:22px;height:22px;color:#2b3245;left:838.50px;letter-spacing:-0.173px;-webkit-text-stroke:0.25px #2b3245;">1.38k</div>
<svg style="left:0;top:0" width="1984" height="1140"><g stroke="#4d84d9" stroke-width="1.75" fill="none"><path d="M928.60 801.30 h7.00"/><path d="M938.56 801.30 h7.00"/><path d="M948.52 801.30 h7.00"/><path d="M968.44 801.30 h7.00"/><path d="M978.40 801.30 h7.00"/><path d="M988.36 801.30 h7.00"/><path d="M998.32 801.30 h7.00"/><path d="M1008.28 801.30 h7.00"/><path d="M1018.24 801.30 h7.00"/><path d="M1028.20 801.30 h7.00"/><path d="M1038.16 801.30 h7.00"/><path d="M1048.12 801.30 h7.00"/><path d="M1058.08 801.30 h7.00"/><path d="M1068.04 801.30 h7.00"/></g><rect x="958.48" y="757.60" width="7.00" height="44.45" rx="3.50" fill="#4d84d9"/></svg>
<div class="t" style="top:761.20px;font-size:13.6px;line-height:18px;height:18px;color:#5db88a;left:1826.50px;font-weight:700;letter-spacing:-0.612px;">ACTIVE</div>
<div class="t" style="top:781.00px;font-size:15px;line-height:20px;height:20px;color:#8b909c;left:1704.60px;letter-spacing:-0.462px;">Last ingested:</div>
<div class="t" style="top:781.00px;font-size:15px;line-height:20px;height:20px;color:#2b3245;left:1796.70px;letter-spacing:-0.263px;-webkit-text-stroke:0.5px #2b3245;">9 hours ago</div>
<svg style="left:0;top:0" width="1984" height="1140" fill="#4b5163"><circle cx="1912" cy="772.8" r="2.400"/><circle cx="1912" cy="780.9" r="2.400"/><circle cx="1912" cy="788.9" r="2.400"/></svg>
<div class="card" style="left:417px;top:837.0px;width:1540.5px;height:89.3px;"></div>
<div class="a" style="left:446.4px;top:871.0px;width:22px;height:22px;box-sizing:border-box;border:2px solid #dcdde1;border-radius:5px;background:#fff;"></div>
<div class="t" style="top:856.81px;font-size:17.8px;line-height:23px;height:23px;color:#2b3245;left:485.40px;letter-spacing:-0.229px;-webkit-text-stroke:0.4px #2b3245;">deals</div>
<svg style="left:0;top:0" width="1984" height="1116" fill="none" stroke="#4fb27f" stroke-width="1.700" stroke-linecap="round" stroke-linejoin="round"><path d="M488 895.8 L491.800 899.3 L499 891.8"/></svg>
<div class="t" style="top:886.41px;font-size:15px;line-height:20px;height:20px;color:#8b909c;left:507.60px;letter-spacing:-0.354px;">Historical Load Ingested</div>
<div class="t" style="top:888.41px;font-size:13px;line-height:17px;height:17px;color:#3a4156;left:672.50px;">•</div>
<div class="t" style="top:886.41px;font-size:15px;line-height:20px;height:20px;color:#8b909c;left:684.40px;letter-spacing:-0.381px;">Position:</div>
<div class="t" style="top:886.41px;font-size:15px;line-height:20px;height:20px;color:#2b3245;left:743.50px;letter-spacing:-0.575px;-webkit-text-stroke:0.5px #2b3245;">May 05...</div>
<div class="t" style="top:871.31px;font-size:17px;line-height:22px;height:22px;color:#2b3245;left:838.50px;letter-spacing:-0.688px;-webkit-text-stroke:0.25px #2b3245;">181</div>
<svg style="left:0;top:0" width="1984" height="1140"><g stroke="#4d84d9" stroke-width="1.75" fill="none"><path d="M928.60 903.30 h7.00"/><path d="M938.56 903.30 h7.00"/><path d="M948.52 903.30 h7.00"/><path d="M968.44 903.30 h7.00"/><path d="M978.40 903.30 h7.00"/><path d="M988.36 903.30 h7.00"/><path d="M998.32 903.30 h7.00"/><path d="M1008.28 903.30 h7.00"/><path d="M1018.24 903.30 h7.00"/><path d="M1028.20 903.30 h7.00"/><path d="M1038.16 903.30 h7.00"/><path d="M1048.12 903.30 h7.00"/><path d="M1058.08 903.30 h7.00"/><path d="M1068.04 903.30 h7.00"/></g><rect x="958.48" y="859.60" width="7.00" height="44.45" rx="3.50" fill="#4d84d9"/></svg>
<div class="t" style="top:863.20px;font-size:13.6px;line-height:18px;height:18px;color:#5db88a;left:1826.50px;font-weight:700;letter-spacing:-0.612px;">ACTIVE</div>
<div class="t" style="top:883.00px;font-size:15px;line-height:20px;height:20px;color:#8b909c;left:1704.60px;letter-spacing:-0.462px;">Last ingested:</div>
<div class="t" style="top:883.00px;font-size:15px;line-height:20px;height:20px;color:#2b3245;left:1796.70px;letter-spacing:-0.263px;-webkit-text-stroke:0.5px #2b3245;">9 hours ago</div>
<svg style="left:0;top:0" width="1984" height="1140" fill="#4b5163"><circle cx="1912" cy="874.8" r="2.400"/><circle cx="1912" cy="882.9" r="2.400"/><circle cx="1912" cy="890.9" r="2.400"/></svg>
<div class="card" style="left:417px;top:939.0px;width:1540.5px;height:89.3px;"></div>
<div class="a" style="left:446.4px;top:973.0px;width:22px;height:22px;box-sizing:border-box;border:2px solid #dcdde1;border-radius:5px;background:#fff;"></div>
<div class="t" style="top:972.31px;font-size:17.8px;line-height:23px;height:23px;color:#2b3245;left:485.40px;letter-spacing:0.154px;-webkit-text-stroke:0.4px #2b3245;">owners</div>
<div class="t" style="top:973.31px;font-size:17px;line-height:22px;height:22px;color:#2b3245;left:838.50px;letter-spacing:-0.922px;-webkit-text-stroke:0.25px #2b3245;">33</div>
<svg style="left:0;top:0" width="1984" height="1140"><g stroke="#4d84d9" stroke-width="1.75" fill="none"><path d="M928.60 1005.30 h7.00"/><path d="M938.56 1005.30 h7.00"/><path d="M948.52 1005.30 h7.00"/><path d="M968.44 1005.30 h7.00"/><path d="M978.40 1005.30 h7.00"/><path d="M988.36 1005.30 h7.00"/><path d="M998.32 1005.30 h7.00"/><path d="M1008.28 1005.30 h7.00"/><path d="M1018.24 1005.30 h7.00"/><path d="M1028.20 1005.30 h7.00"/><path d="M1038.16 1005.30 h7.00"/><path d="M1048.12 1005.30 h7.00"/><path d="M1058.08 1005.30 h7.00"/><path d="M1068.04 1005.30 h7.00"/></g><rect x="958.48" y="961.60" width="7.00" height="44.45" rx="3.50" fill="#4d84d9"/></svg>
<div class="t" style="top:965.20px;font-size:13.6px;line-height:18px;height:18px;color:#5db88a;left:1826.50px;font-weight:700;letter-spacing:-0.612px;">ACTIVE</div>
<div class="t" style="top:985.00px;font-size:15px;line-height:20px;height:20px;color:#8b909c;left:1704.60px;letter-spacing:-0.462px;">Last ingested:</div>
<div class="t" style="top:985.00px;font-size:15px;line-height:20px;height:20px;color:#2b3245;left:1796.70px;letter-spacing:-0.263px;-webkit-text-stroke:0.5px #2b3245;">9 hours ago</div>
<svg style="left:0;top:0" width="1984" height="1140" fill="#4b5163"><circle cx="1912" cy="976.8" r="2.400"/><circle cx="1912" cy="984.9" r="2.400"/><circle cx="1912" cy="992.9" r="2.400"/></svg>
<div class="card" style="left:417px;top:1041.0px;width:1540.5px;height:89.3px;"></div>
<div class="a" style="left:446.4px;top:1075.0px;width:22px;height:22px;box-sizing:border-box;border:2px solid #dcdde1;border-radius:5px;background:#fff;"></div>
<div class="t" style="top:1060.81px;font-size:17.8px;line-height:23px;height:23px;color:#2b3245;left:485.40px;letter-spacing:0.282px;-webkit-text-stroke:0.4px #2b3245;">tickets</div>
<svg style="left:0;top:0" width="1984" height="1116" fill="none" stroke="#4fb27f" stroke-width="1.700" stroke-linecap="round" stroke-linejoin="round"><path d="M488 1099.8 L491.800 1103.3 L499 1095.8"/></svg>
<div class="t" style="top:1090.41px;font-size:15px;line-height:20px;height:20px;color:#8b909c;left:507.60px;letter-spacing:-0.354px;">Historical Load Ingested</div>
<div class="t" style="top:1092.41px;font-size:13px;line-height:17px;height:17px;color:#3a4156;left:672.50px;">•</div>
<div class="t" style="top:1090.41px;font-size:15px;line-height:20px;height:20px;color:#8b909c;left:684.40px;letter-spacing:-0.381px;">Position:</div>
<div class="t" style="top:1090.41px;font-size:15px;line-height:20px;height:20px;color:#2b3245;left:743.50px;letter-spacing:-0.523px;-webkit-text-stroke:0.5px #2b3245;">Nov 02,...</div>
<div class="t" style="top:1075.31px;font-size:17px;line-height:22px;height:22px;color:#2b3245;left:838.50px;-webkit-text-stroke:0.25px #2b3245;">6</div>
<svg style="left:0;top:0" width="1984" height="1140"><g stroke="#4d84d9" stroke-width="1.75" fill="none"><path d="M928.60 1107.30 h7.00"/><path d="M938.56 1107.30 h7.00"/><path d="M948.52 1107.30 h7.00"/><path d="M968.44 1107.30 h7.00"/><path d="M978.40 1107.30 h7.00"/><path d="M988.36 1107.30 h7.00"/><path d="M998.32 1107.30 h7.00"/><path d="M1008.28 1107.30 h7.00"/><path d="M1018.24 1107.30 h7.00"/><path d="M1028.20 1107.30 h7.00"/><path d="M1038.16 1107.30 h7.00"/><path d="M1048.12 1107.30 h7.00"/><path d="M1058.08 1107.30 h7.00"/><path d="M1068.04 1107.30 h7.00"/></g><rect x="958.48" y="1063.60" width="7.00" height="44.45" rx="3.50" fill="#4d84d9"/></svg>
<div class="t" style="top:1067.20px;font-size:13.6px;line-height:18px;height:18px;color:#5db88a;left:1826.50px;font-weight:700;letter-spacing:-0.612px;">ACTIVE</div>
<div class="t" style="top:1087.00px;font-size:15px;line-height:20px;height:20px;color:#8b909c;left:1704.60px;letter-spacing:-0.462px;">Last ingested:</div>
<div class="t" style="top:1087.00px;font-size:15px;line-height:20px;height:20px;color:#2b3245;left:1796.70px;letter-spacing:-0.263px;-webkit-text-stroke:0.5px #2b3245;">9 hours ago</div>
<svg style="left:0;top:0" width="1984" height="1140" fill="#4b5163"><circle cx="1912" cy="1078.8" r="2.400"/><circle cx="1912" cy="1086.9" r="2.400"/><circle cx="1912" cy="1094.9" r="2.400"/></svg>
</div></body></html>
